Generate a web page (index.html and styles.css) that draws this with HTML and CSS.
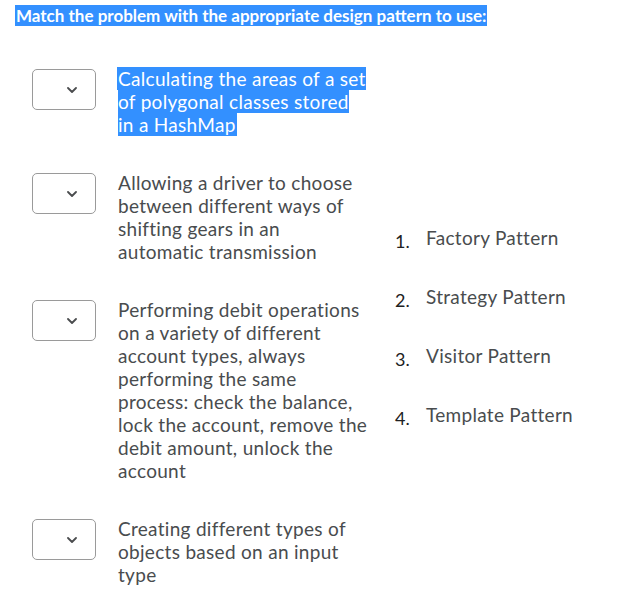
FILE: index.html
```html
<!DOCTYPE html>
<html lang="en">
<head>
<meta charset="utf-8">
<title>Matching question</title>
<link rel="stylesheet" href="styles.css">
</head>
<body>
<div class="page">
  <h1 class="title"><span class="sel">Match the problem with the appropriate design pattern to use:</span></h1>
  <div class="match">
    <div class="problems">
      <div class="item">
        <div class="select"><svg class="chev" width="10" height="6" viewBox="0 0 10 6"><path d="M1 1 L5 5 L9 1" fill="none" stroke="#4a4c4e" stroke-width="1.8" stroke-linecap="round" stroke-linejoin="round"/></svg></div>
        <p class="text"><span class="sel">Calculating the areas of a set of polygonal classes stored in a HashMap</span></p>
      </div>
      <div class="item">
        <div class="select"><svg class="chev" width="10" height="6" viewBox="0 0 10 6"><path d="M1 1 L5 5 L9 1" fill="none" stroke="#4a4c4e" stroke-width="1.8" stroke-linecap="round" stroke-linejoin="round"/></svg></div>
        <p class="text">Allowing a driver to choose between different ways of shifting gears in an automatic transmission</p>
      </div>
      <div class="item">
        <div class="select"><svg class="chev" width="10" height="6" viewBox="0 0 10 6"><path d="M1 1 L5 5 L9 1" fill="none" stroke="#4a4c4e" stroke-width="1.8" stroke-linecap="round" stroke-linejoin="round"/></svg></div>
        <p class="text">Performing debit operations on a variety of different account types, always performing the same process: check the balance, lock the account, remove the debit amount, unlock the account</p>
      </div>
      <div class="item">
        <div class="select"><svg class="chev" width="10" height="6" viewBox="0 0 10 6"><path d="M1 1 L5 5 L9 1" fill="none" stroke="#4a4c4e" stroke-width="1.8" stroke-linecap="round" stroke-linejoin="round"/></svg></div>
        <p class="text">Creating different types of objects based on an input type</p>
      </div>
    </div>
    <ol class="choices">
      <li class="choice"><span class="num">1.</span><span class="label">Factory Pattern</span></li>
      <li class="choice"><span class="num">2.</span><span class="label">Strategy Pattern</span></li>
      <li class="choice"><span class="num">3.</span><span class="label">Visitor Pattern</span></li>
      <li class="choice"><span class="num">4.</span><span class="label">Template Pattern</span></li>
    </ol>
  </div>
</div>
</body>
</html>
```
FILE: styles.css
```css
html, body {
  margin: 0;
  padding: 0;
  background: #ffffff;
}
body {
  font-family: Lato, "Open Sans", sans-serif;
  color: #494c4e;
}
.page {
  padding: 6px 0 0 16px;
}
.title {
  margin: 0;
  font-size: 17px;
  font-weight: 700;
  line-height: 20px;
  color: #ffffff;
}
.sel {
  background: #3390ff;
  color: #ffffff;
  padding: 0 1px;
  margin-left: -1px;
}
.match {
  display: flex;
  align-items: center;
  margin-top: 41px;
}
.problems {
  display: flex;
  flex-direction: column;
  gap: 35px;
  width: 364px;
}
.item {
  display: flex;
  align-items: flex-start;
}
.select {
  box-sizing: border-box;
  width: 64px;
  height: 41px;
  margin: 2px 0 0 16px;
  border: 1px solid #9a9a9a;
  border-radius: 5px;
  background: #fff;
  display: flex;
  align-items: center;
  justify-content: flex-end;
  padding-right: 18px;
  flex: none;
}
.chev {
  display: block;
  margin-top: 1px;
}
.text {
  margin: 0 0 0 22px;
  width: 250px;
  font-size: 19px;
  line-height: 23px;
  letter-spacing: 0.3px;
}
.choices {
  list-style: none;
  margin: 0;
  padding: 0 0 0 15px;
  display: flex;
  flex-direction: column;
  gap: 35px;
  font-size: 19px;
  line-height: 23px;
  letter-spacing: 0.3px;
}
.choice {
  display: flex;
  align-items: baseline;
}
.num {
  width: 31px;
  color: #202122;
  font-size: 18px;
  position: relative;
  top: 3px;
  letter-spacing: 0;
}
.label {
  color: #494c4e;
}
```
